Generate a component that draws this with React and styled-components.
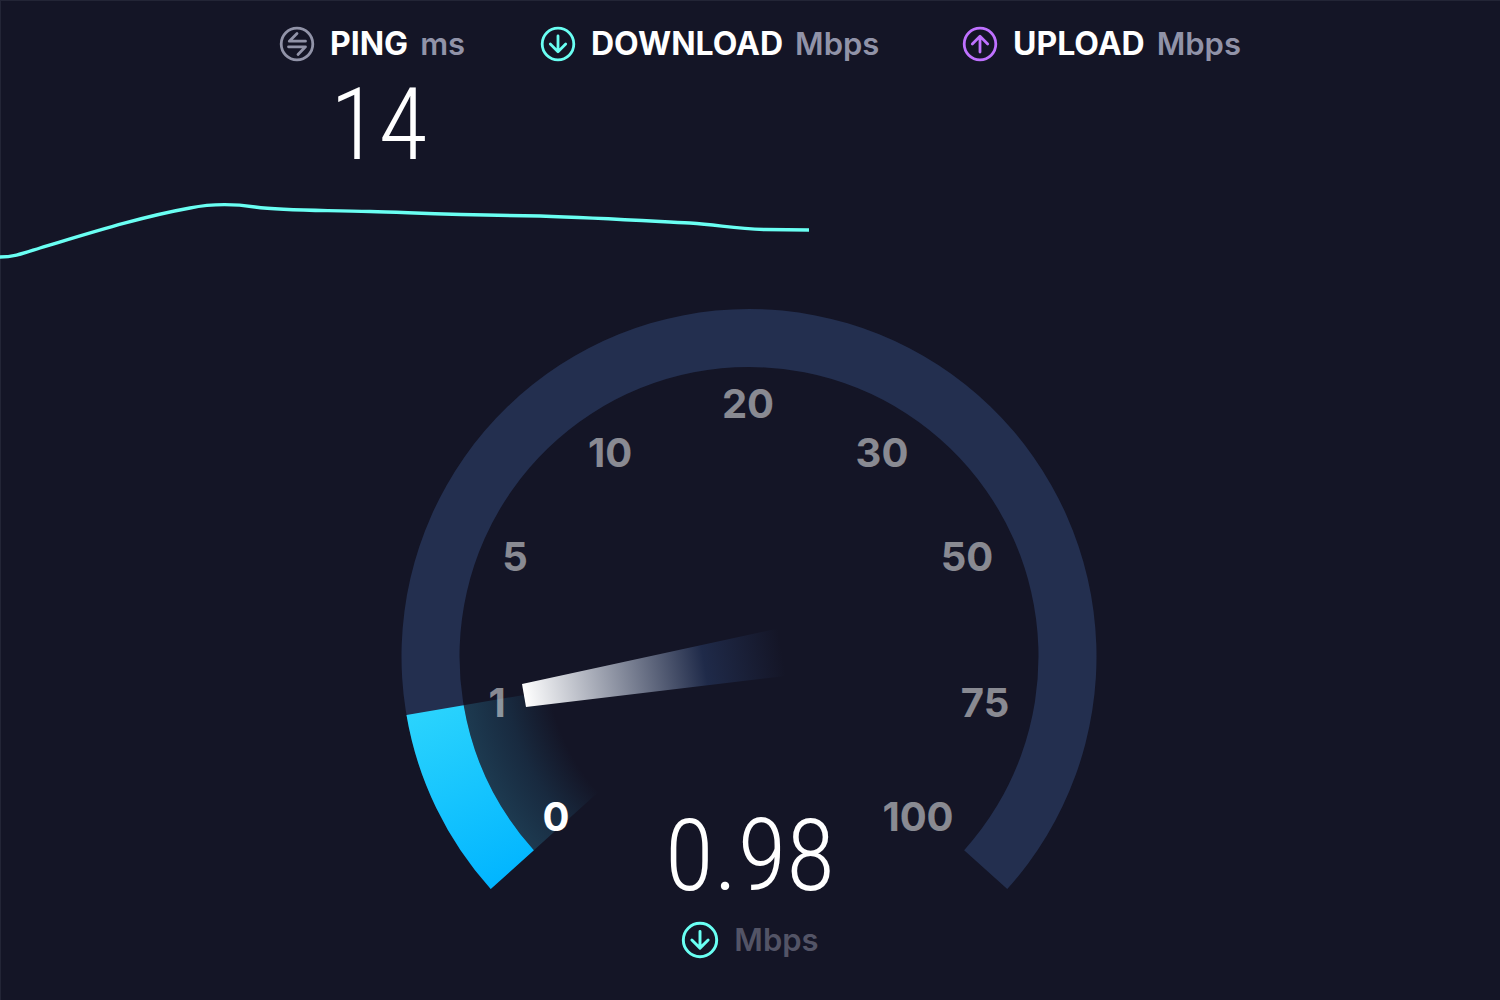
import React from "react";
import styled, { createGlobalStyle } from "styled-components";

const GlobalStyle = createGlobalStyle`
   * {
      box-sizing: border-box;
   }
   body {
      margin: 0;
      background-color: #141526;
      font-family: Inter, "Open Sans", sans-serif;
   }
`

const CYAN = "#6afff3"
const PURPLE = "#bf71ff"
const GREY = "#9193a8"

const ICONS = {
   ping: "M18 7.500L10.300 15.200H26.500M9.500 20.800H26.500L19 28.500",
   download: "M18 10V25M10.300 18L18 25.700L25.700 18",
   upload: "M18 26V11M10.300 18L18 10.300L25.700 18",
}

const METRICS = [
   { name: "PING", unit: "ms", icon: "ping", color: GREY, value: "14" },
   { name: "DOWNLOAD", unit: "Mbps", icon: "download", color: CYAN },
   { name: "UPLOAD", unit: "Mbps", icon: "upload", color: PURPLE },
]

const MARKS = [
   { text: "0", x: 156, y: 531, active: true },
   { text: "1", x: 97, y: 417 },
   { text: "5", x: 115, y: 271 },
   { text: "10", x: 210, y: 167 },
   { text: "20", x: 348, y: 118 },
   { text: "30", x: 482, y: 167 },
   { text: "50", x: 567, y: 271 },
   { text: "75", x: 585, y: 417 },
   { text: "100", x: 518, y: 531 },
]

const CX = 349
const CY = 356.5
const OUTER = 347.5
const INNER = 289.5

// angles are in degrees, clockwise from the right
const point = (r, deg) => {
   const rad = deg * Math.PI / 180
   return `${CX + r * Math.cos(rad)} ${CY + r * Math.sin(rad)}`
}

const band = (outer, inner, from, to) => {
   const large = to - from > 180 ? 1 : 0
   return `M${point(outer, from)}A${outer} ${outer} 0 ${large} 1 ${point(outer, to)}` +
      `L${point(inner, to)}A${inner} ${inner} 0 ${large} 0 ${point(inner, from)}Z`
}

const START = 138
const NOW = 170.3
const END = 402

const MetricIcon = ({ icon, color, size = 36 }) => (
   <Icon viewBox="0 0 36 36" $color={color} $size={size} aria-hidden="true">
      <circle cx="18" cy="18" r="15.800" />
      <path d={ICONS[icon]} />
   </Icon>
)

const Metric = ({ name, unit, icon, color, value }) => (
   <MetricItem>
      <MetricIcon icon={icon} color={color} />
      <MetricText>
         <MetricLabel>{name} <Unit>{unit}</Unit></MetricLabel>
         {value && <BigNumber>{value}</BigNumber>}
      </MetricText>
   </MetricItem>
)

const SpeedLine = () => (
   <LineChart viewBox="0 0 1500 80" preserveAspectRatio="none" aria-hidden="true">
      <path d="M0 67C14 67 24 63 40 58C90 43 140 27 190 18C215 13 235 14 255 17C285 21 320 20 370 21.500C420 23 460 25 540 26C600 28 650 31 690 33C720 35 735 39 765 39.500L809 40" />
   </LineChart>
)

const Gauge = () => (
   <Dial viewBox="0 0 700 660" role="img" aria-label="Download speed gauge">
      <defs>
         <linearGradient id="progress" gradientUnits="userSpaceOnUse" x1="30" y1="410" x2="110" y2="580">
            <stop offset="0" stopColor="#2ad3fd" />
            <stop offset="1" stopColor="#01b5ff" />
         </linearGradient>
         <radialGradient id="glow" gradientUnits="userSpaceOnUse" cx={CX} cy={CY} r={INNER}>
            <stop offset="0.7" stopColor="#1b3850" stopOpacity="0" />
            <stop offset="0.85" stopColor="#1b3850" stopOpacity="0.6" />
            <stop offset="1" stopColor="#1d3a50" stopOpacity="1" />
         </radialGradient>
         <linearGradient id="needle" gradientUnits="userSpaceOnUse" x1="124" y1="396" x2="382" y2="352">
            <stop offset="0" stopColor="#ffffff" />
            <stop offset="0.7" stopColor="#1f2a49" />
            <stop offset="1" stopColor="#1f2a49" stopOpacity="0" />
         </linearGradient>
      </defs>
      <path d={band(OUTER, INNER, START, END)} fill="#232f4f" />
      <path d={band(INNER, 200, START, NOW)} fill="url(#glow)" />
      <path d={band(OUTER, INNER, START, NOW)} fill="url(#progress)" />
      {MARKS.map(mark => (
         <Mark key={mark.text} x={mark.x} y={mark.y} $active={mark.active}>{mark.text}</Mark>
      ))}
      <path d="M122 384L380 328L386 376L126 407Z" fill="url(#needle)" />
   </Dial>
)

const App = () => {
   return (
      <Page>
         <GlobalStyle />
         <Metrics>
            {METRICS.map(metric => <Metric key={metric.name} {...metric} />)}
         </Metrics>
         <SpeedLine />
         <GaugeArea>
            <Gauge />
            <Reading>
               <BigNumber>0.98</BigNumber>
               <ReadingUnit>
                  <MetricIcon icon="download" color={CYAN} size={38} />
                  <Unit $dim>Mbps</Unit>
               </ReadingUnit>
            </Reading>
         </GaugeArea>
      </Page>
   )
}
export default App

const Page = styled.main`
   min-height: 100vh;
   box-shadow: inset 1px 1px #232536;
   overflow: hidden;
`
const Metrics = styled.header`
   display: grid;
   grid-template-columns: 261px 422px 284px;
   justify-content: center;
   height: 190px;
   padding-top: 26px;
   padding-left: 25px;
`
const MetricItem = styled.section`
   display: flex;
   gap: 15px;
`
const Icon = styled.svg`
   flex: none;
   width: ${props => props.$size}px;
   height: ${props => props.$size}px;
   fill: none;
   stroke: ${props => props.$color};
   stroke-width: 2.8;
   stroke-linecap: round;
   stroke-linejoin: round;
`
const MetricText = styled.div`
   display: flex;
   flex-direction: column;
   gap: 4px;
`
const MetricLabel = styled.h2`
   display: flex;
   gap: 12px;
   margin: 0;
   font-size: 32px;
   line-height: 36px;
   font-weight: 700;
   white-space: nowrap;
   color: #ffffff;
`
const Unit = styled.span`
   font-size: 31px;
   line-height: 36px;
   font-weight: 600;
   color: ${props => props.$dim ? "#535466" : GREY};
`
const BigNumber = styled.p`
   margin: 0;
   font-family: "Roboto Condensed", "Open Sans Condensed", Roboto, sans-serif;
   font-size: 100px;
   line-height: 117px;
   font-weight: 300;
   color: #ffffff;
`
const LineChart = styled.svg`
   display: block;
   width: 100%;
   height: 80px;
   fill: none;
   stroke: ${CYAN};
   stroke-width: 3.4;
`
const GaugeArea = styled.section`
   display: grid;
   justify-content: center;
   margin-top: 30px;
`
const Dial = styled.svg`
   grid-area: 1 / 1;
   width: 700px;
   max-width: 100%;
`
const Mark = styled.text`
   font-size: 40px;
   font-weight: 700;
   text-anchor: middle;
   fill: ${props => props.$active ? "#ffffff" : "rgba(255, 255, 255, 0.5)"};
`
const Reading = styled.div`
   grid-area: 1 / 1;
   align-self: end;
   justify-self: center;
   display: flex;
   flex-direction: column;
   align-items: center;
   gap: 7px;
   padding-bottom: 1px;
`
const ReadingUnit = styled.div`
   display: flex;
   align-items: center;
   gap: 15px;
`
